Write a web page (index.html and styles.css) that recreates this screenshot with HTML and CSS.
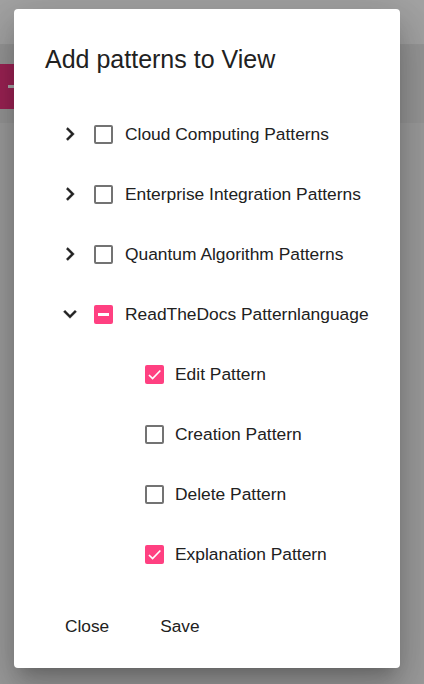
FILE: index.html
```html
<!DOCTYPE html>
<html>
<head>
<meta charset="utf-8">
<link rel="stylesheet" href="styles.css">
</head>
<body>
<div class="page">
  <div class="toolbar"></div>
  <div class="band">
    <div class="fab"><span class="fab-bar"></span></div>
  </div>
</div>

<div class="dialog">
  <h2 class="title">Add patterns to View</h2>
  <div class="tree">
    <div class="row">
      <span class="toggle"><svg viewBox="0 0 24 24" width="26" height="26"><path d="M10 6L8.59 7.41 13.17 12l-4.58 4.59L10 18l6-6z" fill="#212121" stroke="#212121" stroke-width="0.4"/></svg></span>
      <span class="cb"></span>
      <span class="label">Cloud Computing Patterns</span>
    </div>
    <div class="row">
      <span class="toggle"><svg viewBox="0 0 24 24" width="26" height="26"><path d="M10 6L8.59 7.41 13.17 12l-4.58 4.59L10 18l6-6z" fill="#212121" stroke="#212121" stroke-width="0.4"/></svg></span>
      <span class="cb"></span>
      <span class="label">Enterprise Integration Patterns</span>
    </div>
    <div class="row">
      <span class="toggle"><svg viewBox="0 0 24 24" width="26" height="26"><path d="M10 6L8.59 7.41 13.17 12l-4.58 4.59L10 18l6-6z" fill="#212121" stroke="#212121" stroke-width="0.4"/></svg></span>
      <span class="cb"></span>
      <span class="label">Quantum Algorithm Patterns</span>
    </div>
    <div class="row">
      <span class="toggle"><svg viewBox="0 0 24 24" width="26" height="26"><path d="M16.59 8.59L12 13.17 7.41 8.59 6 10l6 6 6-6z" fill="#212121" stroke="#212121" stroke-width="0.4"/></svg></span>
      <span class="cb cb-on"><span class="dash"></span></span>
      <span class="label">ReadTheDocs Patternlanguage</span>
    </div>
    <div class="row child">
      <span class="toggle"></span>
      <span class="cb cb-on"><svg viewBox="0 0 24 24" width="19" height="19"><path d="M5 12.6 9.6 17.2 19.4 7" fill="none" stroke="#fff" stroke-width="2.1"/></svg></span>
      <span class="label">Edit Pattern</span>
    </div>
    <div class="row child">
      <span class="toggle"></span>
      <span class="cb"></span>
      <span class="label">Creation Pattern</span>
    </div>
    <div class="row child">
      <span class="toggle"></span>
      <span class="cb"></span>
      <span class="label">Delete Pattern</span>
    </div>
    <div class="row child">
      <span class="toggle"></span>
      <span class="cb cb-on"><svg viewBox="0 0 24 24" width="19" height="19"><path d="M5 12.6 9.6 17.2 19.4 7" fill="none" stroke="#fff" stroke-width="2.1"/></svg></span>
      <span class="label">Explanation Pattern</span>
    </div>
  </div>
  <div class="actions">
    <button class="btn">Close</button>
    <button class="btn">Save</button>
  </div>
</div>
</body>
</html>
```

FILE: styles.css
```css
html, body {
  margin: 0;
  padding: 0;
  height: 100%;
}
body {
  background: #9c9c9c;
  font-family: "Liberation Sans", Arial, sans-serif;
  overflow: hidden;
}
.page {
  display: flex;
  flex-direction: column;
}
.toolbar {
  height: 44px;
  background: #a3a3a3;
  border-bottom: 1px solid #979797;
}
.band {
  height: 78px;
  background: #969696;
  padding-top: 19px;
  box-sizing: border-box;
}
.fab {
  width: 60px;
  height: 45px;
  background: #9c2254;
  display: flex;
  align-items: center;
  justify-content: flex-end;
}
.fab-bar {
  width: 52px;
  height: 3px;
  background: #a9a9a9;
}
.dialog {
  position: absolute;
  left: 14px;
  top: 9px;
  width: 386px;
  box-sizing: border-box;
  background: #fff;
  border-radius: 4px;
  padding: 35px 0 22px 0;
  box-shadow: 0 11px 15px -7px rgba(0,0,0,.2), 0 24px 38px 3px rgba(0,0,0,.14), 0 9px 46px 8px rgba(0,0,0,.12);
  color: #212121;
}
.title {
  margin: 0;
  padding-left: 31px;
  font-size: 25px;
  font-weight: normal;
  line-height: 30px;
  color: #212121;
}
.tree {
  margin-top: 30px;
  display: flex;
  flex-direction: column;
}
.row {
  height: 60px;
  display: flex;
  align-items: center;
  padding-left: 43px;
}
.row.child {
  padding-left: 94px;
}
.toggle {
  width: 26px;
  height: 26px;
  display: flex;
  align-items: center;
  justify-content: center;
  flex: none;
}
.toggle svg {
  display: block;
}
.cb {
  width: 19px;
  height: 19px;
  box-sizing: border-box;
  border: 2px solid #737373;
  border-radius: 2px;
  margin-left: 11px;
  margin-top: 1px;
  flex: none;
  display: flex;
  align-items: center;
  justify-content: center;
}
.cb-on {
  border: none;
  background: #ff4081;
}
.cb-on svg {
  display: block;
}
.dash {
  width: 11px;
  height: 3px;
  background: #fff;
}
.label {
  margin-left: 12px;
  font-size: 17.4px;
  line-height: 20px;
  white-space: nowrap;
}
.row.child .label {
  margin-left: 11px;
}
.actions {
  margin-top: 22px;
  display: flex;
  gap: 17px;
  padding-left: 34px;
}
.btn {
  font-family: "Liberation Sans", Arial, sans-serif;
  font-size: 17.3px;
  line-height: 40px;
  height: 40px;
  padding: 0 17px;
  background: transparent;
  border: none;
  color: #212121;
  margin: 0;
}
```
